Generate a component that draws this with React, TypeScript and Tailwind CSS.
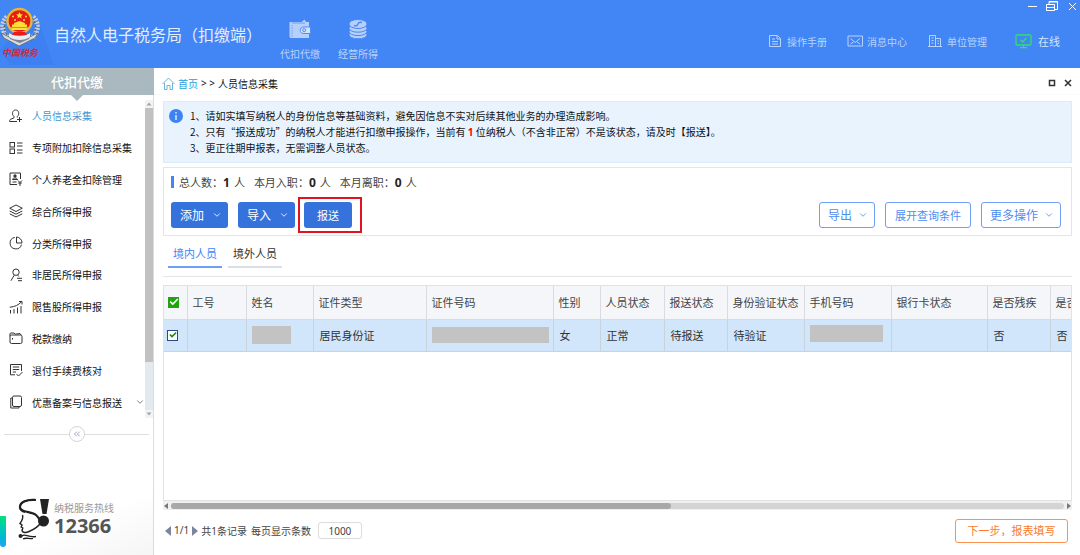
import { useState, type ReactNode } from "react";
import { Check, ChevronDown, ChevronsLeft } from "lucide-react";
import clsx from "clsx";

const menuItems: { label: string; icon: ReactNode }[] = [
  {
    label: "人员信息采集",
    icon: (
      <>
        <path d="M5 7.5C3.8 6.5 3.3 5.2 3.6 3.6 3.9 2 5.1 1 6.6 1s2.8 1 3.1 2.6c.3 1.6-.3 3-1.4 3.9v1" />
        <path d="M5 7.5v1.3L1.4 10.4c-.6.3-.8.9-.8 2.1H8" />
        <path d="M10.5 8v5M8 10.5h5" />
      </>
    ),
  },
  {
    label: "专项附加扣除信息采集",
    icon: (
      <>
        <rect x="1" y="1.5" width="4.5" height="4.5" />
        <rect x="1" y="8" width="4.5" height="4.5" />
        <path d="M8 2h5.5M8 5h5.5M8 9h5.5M8 12h5.5" />
      </>
    ),
  },
  {
    label: "个人养老金扣除管理",
    icon: (
      <>
        <path d="M8 12.5H1V1h10.5v6" />
        <circle cx="6" cy="4" r="1.2" fill="currentColor" />
        <path d="M3.5 7.5c0-2 5-2 5 0zM3.5 10h4" />
        <path d="M9 8.5l2 2 2-2M11 10.5V14M9.2 11h3.6" />
      </>
    ),
  },
  {
    label: "综合所得申报",
    icon: (
      <>
        <path d="M7 1l6.3 3.2L7 7.5.7 4.2z" />
        <path d="M.7 7L7 10.2 13.3 7M.7 9.8L7 13l6.3-3.2" />
      </>
    ),
  },
  {
    label: "分类所得申报",
    icon: (
      <>
        <path d="M5.8 1.4a5.8 5.8 0 1 0 6.7 7.2" />
        <path d="M7.5 1v6H13A5.8 5.8 0 0 0 7.5 1z" />
      </>
    ),
  },
  {
    label: "非居民所得申报",
    icon: (
      <>
        <circle cx="7" cy="4.2" r="3.2" />
        <path d="M5.2 7.2L2 12.7M8.8 7.2l1 1.3M8 10.3h5M9 12.7h4" />
      </>
    ),
  },
  {
    label: "限售股所得申报",
    icon: (
      <>
        <path d="M1.5 10v3.5M5 9v4.5M8.5 7.5v6M12 6v7.5" />
        <path d="M.8 7.2C5.5 7 9.5 5 12.5 1.8M10 1.5h3v3" />
      </>
    ),
  },
  {
    label: "税款缴纳",
    icon: (
      <>
        <rect x="1" y="4" width="12" height="8.5" rx="1.5" />
        <path d="M1 5.5V3c0-.6.4-1 1-1h3l1.2 1.2L11 2.5l1 1.5M3.5 7v1.5" />
      </>
    ),
  },
  {
    label: "退付手续费核对",
    icon: (
      <>
        <path d="M12.5 8V1.5h-11v10.3H6M3.8 4h6.4M3.8 6.5h6.4M3.8 9H7" />
        <path d="M7.5 11l2 2L13.5 9" />
      </>
    ),
  },
  {
    label: "优惠备案与信息报送",
    icon: (
      <>
        <rect x="3.5" y="1" width="9" height="10.5" rx="1.5" />
        <path d="M3.5 3H1.8v10H10v-1.5" />
      </>
    ),
  },
];

const columns = [
  { title: "工号", width: "w-[59px]" },
  { title: "姓名", width: "w-[67px]" },
  { title: "证件类型", width: "w-[113px]" },
  { title: "证件号码", width: "w-[127px]" },
  { title: "性别", width: "w-[47px]" },
  { title: "人员状态", width: "w-[64px]" },
  { title: "报送状态", width: "w-[63px]" },
  { title: "身份验证状态", width: "w-[77px]" },
  { title: "手机号码", width: "w-[87px]" },
  { title: "银行卡状态", width: "w-[96px]" },
  { title: "是否残疾", width: "w-[63px]" },
  { title: "是否烈属", width: "w-[64px]" },
];

const row: ReactNode[] = [
  "",
  <Mask className="h-[18px] w-[39px]" />,
  "居民身份证",
  <Mask className="h-4 w-[117px]" />,
  "女",
  "正常",
  "待报送",
  "待验证",
  <Mask className="mb-1 h-[17px] w-[73px]" />,
  "",
  "否",
  "否",
];

function Mask({ className }: { className: string }) {
  return <span className={clsx("-ml-px block bg-[#c3c3c3]", className)} />;
}

function Num({ children, className }: { children: ReactNode; className?: string }) {
  return <span className={clsx("font-['Noto_Sans',sans-serif]", className)}>{children}</span>;
}

function Emblem() {
  return (
    <svg viewBox="0 0 40 40" className="h-10 w-10" aria-hidden="true">
      <path d="M7 10C1 15 1 24 8 31M33 10c6 5 6 14-1 21" fill="none" stroke="#c9cfd6" strokeWidth="5" strokeDasharray="2 1" />
      <path d="M8 11c-5 5-5 13 1 19M32 11c5 5 5 13-1 19" fill="none" stroke="#59616d" strokeWidth="1.4" strokeDasharray="2 2" />
      <path d="M1 26l18 9 19-9-3 5-16 8-15-8z" fill="#d9dde2" stroke="#5c6470" strokeWidth=".8" />
      <path d="M8 26c5 5 18 5 23 0l-2 6-9 4-10-4z" fill="#7b8490" />
      <path d="M9 26c5 4 16 4 21 0v4c-6 4-15 4-21 0z" fill="#e9edf1" />
      <circle cx="19.5" cy="14" r="12" fill="#e81c12" stroke="#e7b53c" strokeWidth="2.4" />
      <path d="M19.5 5l1 2.2 2.4.2-1.8 1.6.6 2.4-2.2-1.3-2.2 1.3.6-2.4-1.8-1.6 2.4-.2z" fill="#ffdf3a" />
      <g fill="#ffdf3a">
        <circle cx="13" cy="9.5" r="1" />
        <circle cx="26" cy="9.5" r="1" />
        <circle cx="15" cy="13" r="1" />
        <circle cx="24" cy="13" r="1" />
        <path d="M14 16l5.5-2 5.5 2v1.5h2V20H12v-2.5h2zM10.5 20.5h18l-2 2.5h-14z" />
      </g>
      <path d="M14 25h11l2 3H12z" fill="#e81c12" />
    </svg>
  );
}

function WalletIcon() {
  return (
    <svg viewBox="0 0 24 22" className="h-[22px] w-6" aria-hidden="true">
      <path d="M1.500 4h12l3-2.500 1.500 2.500h3v16H3a1.500 1.500 0 0 1-1.500-1.500z" fill="#b5d0fb" />
      <path d="M4 5h13" stroke="#6c9ff5" />
      <path d="M4 7v12" stroke="#6c9ff5" strokeDasharray="1.5 1" />
      <path d="M22.5 9H16c-2.4 0-3.800 1.500-3.800 3.300S13.600 15.500 16 15.500h6.500z" fill="#cfe1fd" stroke="#4f8cf5" />
      <circle cx="16.200" cy="12.200" r="1.500" fill="none" stroke="#4f8cf5" />
    </svg>
  );
}

function CoinsIcon() {
  return (
    <svg viewBox="0 0 20 22" className="h-[22px] w-5" aria-hidden="true">
      <g fill="#b5d0fb" stroke="#4a88f5">
        <ellipse cx="10" cy="16.8" rx="9" ry="4" />
        <ellipse cx="10" cy="13.6" rx="9" ry="4" />
        <ellipse cx="10" cy="10.2" rx="9" ry="4" />
        <ellipse cx="10" cy="6" rx="9" ry="4.5" />
      </g>
      <path d="M6 7.5c2 1 3.5 0 4-1.5s2-2 4-1.5" fill="none" stroke="#4a88f5" strokeWidth="1.4" />
    </svg>
  );
}

function HotlineIcon() {
  return (
    <svg viewBox="0 0 32 42" className="h-[42px] w-8" fill="none" stroke="#222" aria-hidden="true">
      <path d="M18 2C9 1 1.500 4 2 9.500c.5 5 12 4 16 7.500 2 1.800 3 3.500 4 5.500" strokeWidth="2.200" />
      <path d="M17 1.500C9 1.500 2 4.500 2 9.500c0 2.500 2 4 5 4.800" strokeWidth="1.600" />
      <path d="M4.500 17c1 3 0 5-2.500 8.500l2 1.500-.8 2 1.600 1-.8 2.500c.5 2.500 4 2.500 7 1 5-2 9-4.500 12-9" strokeWidth="1.400" />
      <circle cx="2.500" cy="38" r="2" fill="#222" stroke="none" />
      <path d="M4 38c3-3 6 2 14 .5M5 41c3-2 7 .5 10-.5" strokeWidth="1.300" />
      <path d="M22 1h9l-2.500 15h-4z" fill="#222" stroke="none" />
      <circle cx="25.500" cy="23" r="5.500" fill="#222" stroke="none" />
    </svg>
  );
}

function HeaderLink({ children, icon, className }: { children: string; icon: ReactNode; className?: string }) {
  return (
    <a href="#" className={clsx("flex items-center gap-1 text-[10px] text-[#b9d3fc]", className)}>
      <svg viewBox="0 0 16 14" className="h-3.5 w-4" fill="none" stroke="currentColor" aria-hidden="true">
        {icon}
      </svg>
      {children}
    </a>
  );
}

function Header() {
  return (
    <header className="relative flex h-[68px] shrink-0 items-start bg-[#4285f5] text-white">
      <div className="relative h-[68px] w-[54px] shrink-0">
        <svg viewBox="0 0 54 68" className="absolute inset-0 h-full w-full" aria-hidden="true">
          <path d="M36 14L54 65H10L0 50z" fill="#3d80f2" />
        </svg>
        <div className="relative pt-[7px]">
          <Emblem />
          <div className="w-10 text-center text-[9px] leading-3 font-bold text-[#d3283a] italic">中国税务</div>
        </div>
      </div>
      <h1 className="mt-[22px] text-[16px] leading-6 whitespace-nowrap text-[#e4eefe]">自然人电子税务局（扣缴端）</h1>
      <nav className="mt-[18px] ml-[17px] flex gap-4 text-[10px] leading-4 text-[#b9d3fc]">
        <a href="#" className="flex w-[42px] flex-col items-center gap-[6px]">
          <WalletIcon />
          代扣代缴
        </a>
        <a href="#" className="flex w-[42px] flex-col items-center gap-[6px]">
          <CoinsIcon />
          经营所得
        </a>
      </nav>
      <div className="mt-[33px] mr-5 ml-auto flex h-4 items-center">
        <HeaderLink
          icon={<path d="M2.500 1.500h8l3 3v8h-11zM10 1.500V5h3.500M5 5h3M5 7.500h6M5 10h6" />}
          className="mr-5"
        >
          操作手册
        </HeaderLink>
        <HeaderLink
          icon={<path d="M1 2h14.500v10H1zM3.500 4.500l4.700 4 4.700-4M3.500 10l3-2M13 10l-3-2" />}
          className="mr-5"
        >
          消息中心
        </HeaderLink>
        <HeaderLink
          icon={<path d="M2.500 12.500v-11h6v11M8.500 4.500h5v8M1 12.500h14M4.500 4h2M4.500 6.500h2M4.500 9h2M10.500 7h1.500M10.500 9.500h1.500" />}
          className="mr-7"
        >
          单位管理
        </HeaderLink>
        <span className="flex items-center gap-1.5 text-[11px] text-[#d5e4fd]">
          <svg viewBox="0 0 17 15" className="h-[15px] w-[17px]" fill="none" stroke="#2fe06a" strokeWidth="1.300" aria-hidden="true">
            <rect x="1" y="1" width="15" height="10" rx="1" />
            <path d="M5.500 6l2 2 4-4M8.500 11v2.500M5 13.700h7" />
          </svg>
          在线
        </span>
      </div>
      <div className="absolute top-0 right-0.5 flex gap-2 text-white">
        <button aria-label="最小化">
          <svg viewBox="0 0 12 12" className="size-3" stroke="currentColor">
            <path d="M2 6.500h9" />
          </svg>
        </button>
        <button aria-label="还原">
          <svg viewBox="0 0 12 12" className="size-3" fill="none" stroke="currentColor">
            <path d="M.5 4.500h8v6h-8zM.5 7.500h8M3 4V1.500h8.500v8H9M3 2h8" />
          </svg>
        </button>
        <button aria-label="关闭">
          <svg viewBox="0 0 12 12" className="size-3" stroke="currentColor">
            <path d="M3 3l7 7M10 3l-7 7" />
          </svg>
        </button>
      </div>
    </header>
  );
}

function Sidebar() {
  return (
    <aside className="flex w-[154px] shrink-0 flex-col border-r border-[#dcdcdc]">
      <div className="relative -mr-px flex h-[27px] items-center justify-center bg-[#aab8c0] text-[13px] font-medium text-white">
        代扣代缴
        <svg viewBox="0 0 12 6" className="absolute top-full h-1.5 w-3" aria-hidden="true">
          <path d="M0 0h12L6 6z" fill="#aab8c0" />
        </svg>
      </div>
      <div className="mt-[5px] flex">
        <nav className="flex h-[318px] flex-1 flex-col">
          {menuItems.map((item, i) => (
            <a
              key={item.label}
              href="#"
              className={clsx(
                "flex flex-1 items-center gap-[9px] pl-[9px] text-[10px] whitespace-nowrap",
                i === 0 ? "text-[#4797cf]" : "text-[#111]"
              )}
            >
              <svg viewBox="0 0 14 14" className="size-3.5 shrink-0 text-[#333]" fill="none" stroke="currentColor" aria-hidden="true">
                {item.icon}
              </svg>
              {item.label}
              {i === menuItems.length - 1 && <ChevronDown className="ml-auto size-2.5 text-[#666]" strokeWidth={2} />}
            </a>
          ))}
        </nav>
        <div className="flex w-2 flex-col bg-[#e3eaef]">
          <ScrollArrow path="M1.500 5.500L4 2.500l2.500 3z" />
          <div className="h-[254px] bg-[#c1c1c1]" />
          <div className="mt-auto flex">
            <ScrollArrow path="M1.500 2.500L4 5.500l2.500-3z" />
          </div>
        </div>
      </div>
      <div className="mx-1 mt-2 flex items-center">
        <div className="h-px flex-1 bg-[#dedede]" />
        <button aria-label="收起菜单" className="flex size-4 items-center justify-center rounded-full border border-[#d5d5d5] text-[#8391b5]">
          <ChevronsLeft className="size-2.5" />
        </button>
        <div className="h-px flex-1 bg-[#dedede]" />
      </div>
      <div className="mt-auto flex h-[66px] items-start bg-linear-to-br from-white from-50% to-[#f5f5f5]">
        <div className="mt-[27px] h-[31px] w-1.5 rounded-b bg-linear-to-b from-[#0be07c] to-[#1fa2f5]" />
        <div className="mt-[9px] ml-3">
          <HotlineIcon />
        </div>
        <div className="mt-[11px] ml-1 text-[#999]">
          <p className="text-[10px] leading-4">纳税服务热线</p>
          <p className="font-['Noto_Sans',sans-serif] text-[20px] leading-5 font-bold text-[#555]">12366</p>
        </div>
      </div>
    </aside>
  );
}

function ScrollArrow({ path }: { path: string }) {
  return (
    <svg viewBox="0 0 8 8" className="size-2 shrink-0 bg-[#f3f3f3]" aria-hidden="true">
      <path d={path} fill="#a5a5a5" />
    </svg>
  );
}

function SolidButton({ children, arrow }: { children: string; arrow?: boolean }) {
  return (
    <button
      className={clsx(
        "flex h-[26px] items-center rounded-[3px] bg-[#3672db] text-white",
        arrow ? "w-[57px] justify-between pr-1.5 pl-[9px] text-[12px]" : "w-12 justify-center text-[11px]"
      )}
    >
      {children}
      {arrow && <ChevronDown className="size-2.5" strokeWidth={2} />}
    </button>
  );
}

function OutlineButton({ children, arrow }: { children: string; arrow?: boolean }) {
  return (
    <button
      className={clsx(
        "flex h-[26px] items-center gap-1.5 rounded-[3px] border border-[#6ea0f5] bg-white text-[#4f8df2]",
        arrow ? "pr-1.5 pl-2 text-[12px]" : "px-[9px] text-[11px]"
      )}
    >
      {children}
      {arrow && <ChevronDown className="size-2.5" strokeWidth={2} />}
    </button>
  );
}

function Notice() {
  return (
    <section className="flex h-[62px] gap-[7px] border border-[#dcebfb] bg-[#e8f3fe] pt-1.5 pl-[5px] text-[#111]">
      <svg viewBox="0 0 14 14" className="mt-px size-3.5" aria-hidden="true">
        <circle cx="7" cy="7" r="7" fill="#3f83f3" />
        <path d="M7 3v1.500M7 6v5" stroke="#fff" strokeWidth="1.200" />
      </svg>
      <div className="text-[10px] leading-4 whitespace-nowrap">
        <p>1、请如实填写纳税人的身份信息等基础资料，避免因信息不实对后续其他业务的办理造成影响。</p>
        <p>
          2、只有“报送成功”的纳税人才能进行扣缴申报操作，当前有 <Num className="font-bold text-[#f00]">1</Num> 位纳税人（不含非正常）不是该状态，请及时【报送】。
        </p>
        <p>3、更正往期申报表，无需调整人员状态。</p>
      </div>
    </section>
  );
}

function Stat({ label, value }: { label: string; value: number }) {
  return (
    <p>
      {label}：<Num className="mr-1 text-[12px] font-bold text-[#222]">{value}</Num>人
    </p>
  );
}

function Toolbar() {
  return (
    <section className="mt-1 h-[69px] border border-[#e5e5e5] pl-[7px]">
      <div className="mt-2 flex h-3 items-center text-[11px] leading-3 text-[#444]">
        <span className="mr-[5px] h-3 w-[3px] bg-[#4285f5]" />
        <div className="flex gap-[9px]">
          <Stat label="总人数" value={1} />
          <Stat label="本月入职" value={0} />
          <Stat label="本月离职" value={0} />
        </div>
      </div>
      <div className="mt-[9px] flex items-center pr-2.5">
        <SolidButton arrow>添加</SolidButton>
        <div className="ml-2.5">
          <SolidButton arrow>导入</SolidButton>
        </div>
        <div className="ml-[3px] border-2 border-[#e0141e] py-[3px] pr-2 pl-1">
          <SolidButton>报送</SolidButton>
        </div>
        <div className="ml-auto flex gap-2.5">
          <OutlineButton arrow>导出</OutlineButton>
          <OutlineButton>展开查询条件</OutlineButton>
          <OutlineButton arrow>更多操作</OutlineButton>
        </div>
      </div>
    </section>
  );
}

function Tabs() {
  const [active, setActive] = useState(0);

  return (
    <div className="flex h-[41px] items-start gap-1.5 border-b border-[#e5e5e5] pt-[5px] pl-[5px]">
      {["境内人员", "境外人员"].map((tab, i) => (
        <button
          key={tab}
          onClick={() => setActive(i)}
          className={clsx(
            "h-[27px] w-[54px] border-b-2 text-[11px]",
            active === i ? "border-[#6d9ff5] text-[#4285f5]" : "border-[#dcdee6] text-[#333]"
          )}
        >
          {tab}
        </button>
      ))}
    </div>
  );
}

function PersonTable() {
  const [selected, setSelected] = useState(true);

  return (
    <div className="mt-2 flex flex-1 flex-col">
      <div className="flex-1 overflow-hidden border border-[#e2e2e2]">
        <table className="w-[950px] table-fixed border-collapse text-left text-[11px] text-[#444]">
          <thead>
            <tr className="h-[33px] bg-[#f4f6fa]">
              <th className="w-[23px] border-r border-b border-[#d9dbe0] pl-1">
                <label className="relative flex size-[11px] items-center justify-center bg-[#22a30f]">
                  <input
                    type="checkbox"
                    aria-label="全选"
                    checked={selected}
                    onChange={() => setSelected(!selected)}
                    className="absolute inset-0 appearance-none"
                  />
                  {selected && <Check className="size-2.5 text-white" strokeWidth={4} />}
                </label>
              </th>
              {columns.map((col) => (
                <th key={col.title} className={clsx("border-r border-b border-[#d9dbe0] pl-[5px] font-normal whitespace-nowrap", col.width)}>
                  {col.title}
                </th>
              ))}
            </tr>
          </thead>
          <tbody>
            <tr className="h-8 bg-[#d1e6fb]">
              <td className="border-r border-b border-[#c9d3de] pl-[3px]">
                <label className="relative flex size-[11px] items-center justify-center border border-[#2d4887] bg-white">
                  <input
                    type="checkbox"
                    aria-label="选择人员"
                    checked={selected}
                    onChange={() => setSelected(!selected)}
                    className="absolute inset-0 appearance-none"
                  />
                  {selected && <Check className="size-2 text-[#1d8a12]" strokeWidth={5} />}
                </label>
              </td>
              {row.map((cell, i) => (
                <td key={i} className="border-r border-b border-[#c9d3de] pl-1.5 text-[#333]">
                  {cell}
                </td>
              ))}
            </tr>
          </tbody>
        </table>
      </div>
      <div className="flex h-[9px] items-center bg-[#f0f0f0] px-px">
        <svg viewBox="0 0 4 6" className="h-1.5 w-1" aria-hidden="true">
          <path d="M4 0v6L0 3z" fill="#777" />
        </svg>
        <div className="mx-[3px] h-1.5 flex-1 rounded-full bg-[#d4d4d4]">
          <div className="h-full w-[56%] rounded-full bg-[#a8a8a8]" />
        </div>
        <svg viewBox="0 0 4 6" className="h-1.5 w-1" aria-hidden="true">
          <path d="M0 0v6l4-3z" fill="#777" />
        </svg>
      </div>
    </div>
  );
}

function Pager() {
  return (
    <footer className="flex h-[45px] shrink-0 items-center pr-1 pb-1 pl-0.5 text-[10px] text-[#444]">
      <button aria-label="上一页">
        <svg viewBox="0 0 6 10" className="h-2.5 w-1.5">
          <path d="M6 0v10L0 5z" fill="#7c859e" />
        </svg>
      </button>
      <Num className="mx-[3px]">1/1</Num>
      <button aria-label="下一页">
        <svg viewBox="0 0 6 10" className="h-2.5 w-1.5">
          <path d="M0 0v10l6-5z" fill="#7c859e" />
        </svg>
      </button>
      <span className="ml-[3px]">
        共<Num>1</Num>条记录
      </span>
      <label htmlFor="page-size" className="ml-1">
        每页显示条数
      </label>
      <input
        id="page-size"
        defaultValue="1000"
        className="ml-[7px] h-[17px] w-11 rounded-[3px] border border-[#dcdcdc] text-center font-['Noto_Sans',sans-serif] text-[10px]"
      />
      <button className="ml-auto h-6 w-[113px] rounded-[3px] border border-[#fb9250] text-[11px] text-[#fb7a2c]">
        下一步，报表填写
      </button>
    </footer>
  );
}

export default function App() {
  return (
    <div className="flex min-h-screen flex-col bg-white font-['Noto_Sans_CJK_SC',sans-serif]">
      <Header />
      <div className="flex flex-1">
        <Sidebar />
        <main className="flex min-w-0 flex-1 flex-col">
          <div className="flex h-[27px] shrink-0 items-center border-b border-[#fafafa] pt-1 pr-2 pl-2 text-[10px] text-[#111]">
            <svg viewBox="0 0 13 13" className="mr-[3px] size-[13px]" fill="none" stroke="#6db3d6" aria-hidden="true">
              <path d="M.5 7L6.500 1l6 6M2.500 6v6.500H5V8.500h3v4h2.500V6" />
            </svg>
            <a href="#" className="text-[#2b9fd8]">
              首页
            </a>
            <span className="mx-[3px] font-['Noto_Sans',sans-serif]">&gt;&nbsp;&gt;</span>
            <span>人员信息采集</span>
            <div className="ml-auto flex gap-2 text-[#333]">
              <button aria-label="最大化">
                <svg viewBox="0 0 8 8" className="size-2" fill="none" stroke="currentColor" strokeWidth="1.500">
                  <rect x="1.500" y="1.500" width="5" height="5" />
                </svg>
              </button>
              <button aria-label="关闭页签">
                <svg viewBox="0 0 8 8" className="size-2" stroke="currentColor" strokeWidth="1.600">
                  <path d="M1 1l6 6M7 1L1 7" />
                </svg>
              </button>
            </div>
          </div>
          <div className="flex min-w-0 flex-1 flex-col pt-1.5 pr-2 pl-[9px]">
            <Notice />
            <Toolbar />
            <Tabs />
            <PersonTable />
            <Pager />
          </div>
        </main>
      </div>
    </div>
  );
}
